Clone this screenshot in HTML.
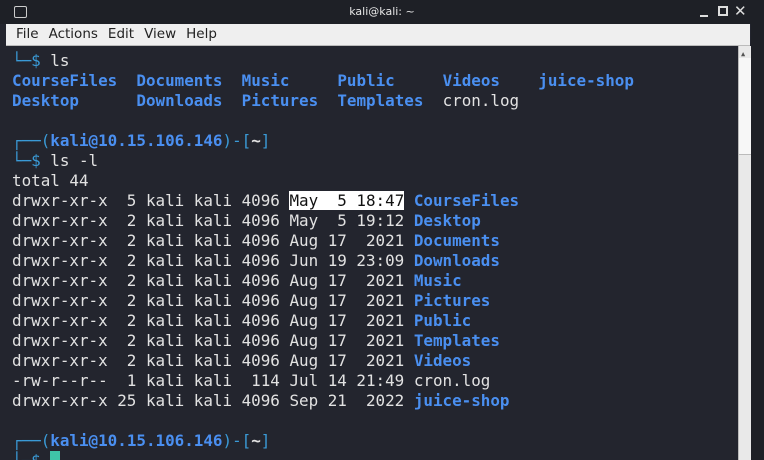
<!DOCTYPE html>
<html><head><style>
body{margin:0;width:764px;height:460px;overflow:hidden;background:#23252e;font-family:"DejaVu Sans Mono","Liberation Mono",monospace;}
#title{position:absolute;left:0;top:0;width:764px;height:24px;background:#1e2026;color:#e6e6e6;font:11px "DejaVu Sans","Liberation Sans",sans-serif;text-align:center;line-height:24px}
#menu{position:absolute;left:6px;top:24px;width:744px;height:21px;background:#efefef;border-bottom:1px solid #bbb;font:13.5px "DejaVu Sans","Liberation Sans",sans-serif;color:#222;line-height:21px}
#menu span{margin-left:10px;margin-right:0}
#term{position:absolute;left:6px;top:46px;width:732px;height:414px;background:#23252e;overflow:hidden}
pre{margin:0;position:absolute;left:6px;top:5px;font-size:15.9px;line-height:20px;color:#e2e2e2;font-family:"DejaVu Sans Mono",monospace}
.b{color:#4a8ff0;font-weight:bold}
.p{color:#3a9ad6}
.h{background:#fff;color:#111}
#sb{position:absolute;left:738px;top:46px;width:12px;height:414px;background:#e9e9e9;border-left:1px solid #bbb}
#rt{position:absolute;left:751px;top:0;width:13px;height:460px;background:#1e2026}
.cur{background:#3fc5a8;color:#3fc5a8}
</style></head><body>
<div id="title">kali@kali: ~</div>
<div style="position:absolute;left:14px;top:6px;width:11px;height:10px;border:1px solid #ccc;border-radius:2px"></div>
<div style="position:absolute;left:700px;top:15px;width:8px;height:2px;background:#ddd"></div>
<div style="position:absolute;left:718px;top:6px;width:6px;height:6px;border:2px solid #ddd"></div>
<div style="position:absolute;left:734px;top:2px;color:#ddd;font:15px sans-serif">✕</div>
<div id="menu"><span>File</span><span>Actions</span><span>Edit</span><span>View</span><span>Help</span></div>
<div id="term"><pre><span class="p">└─$</span> ls
<span class="b">CourseFiles</span>  <span class="b">Documents</span>  <span class="b">Music</span>     <span class="b">Public</span>     <span class="b">Videos</span>    <span class="b">juice-shop</span>
<span class="b">Desktop</span>      <span class="b">Downloads</span>  <span class="b">Pictures</span>  <span class="b">Templates</span>  cron.log

<span class="p">┌──(</span><span class="b">kali@10.15.106.146</span><span class="p">)-[</span><b>~</b><span class="p">]</span>
<span class="p">└─$</span> ls -l
total 44
drwxr-xr-x  5 kali kali 4096 <span class="h">May  5 18:47</span> <span class="b">CourseFiles</span>
drwxr-xr-x  2 kali kali 4096 May  5 19:12 <span class="b">Desktop</span>
drwxr-xr-x  2 kali kali 4096 Aug 17  2021 <span class="b">Documents</span>
drwxr-xr-x  2 kali kali 4096 Jun 19 23:09 <span class="b">Downloads</span>
drwxr-xr-x  2 kali kali 4096 Aug 17  2021 <span class="b">Music</span>
drwxr-xr-x  2 kali kali 4096 Aug 17  2021 <span class="b">Pictures</span>
drwxr-xr-x  2 kali kali 4096 Aug 17  2021 <span class="b">Public</span>
drwxr-xr-x  2 kali kali 4096 Aug 17  2021 <span class="b">Templates</span>
drwxr-xr-x  2 kali kali 4096 Aug 17  2021 <span class="b">Videos</span>
-rw-r--r--  1 kali kali  114 Jul 14 21:49 cron.log
drwxr-xr-x 25 kali kali 4096 Sep 21  2022 <span class="b">juice-shop</span>

<span class="p">┌──(</span><span class="b">kali@10.15.106.146</span><span class="p">)-[</span><b>~</b><span class="p">]</span>
<span class="p">└─$</span> <span class="cur">_</span></pre></div>
<div id="sb"><div style="position:absolute;left:2px;top:4px;color:#555;font-size:7px">▲</div><div style="position:absolute;left:0;top:12px;width:12px;height:96px;background:#f7f7f7;border-bottom:1px solid #bbb"></div></div>
<div id="rt"></div>
</body></html>
